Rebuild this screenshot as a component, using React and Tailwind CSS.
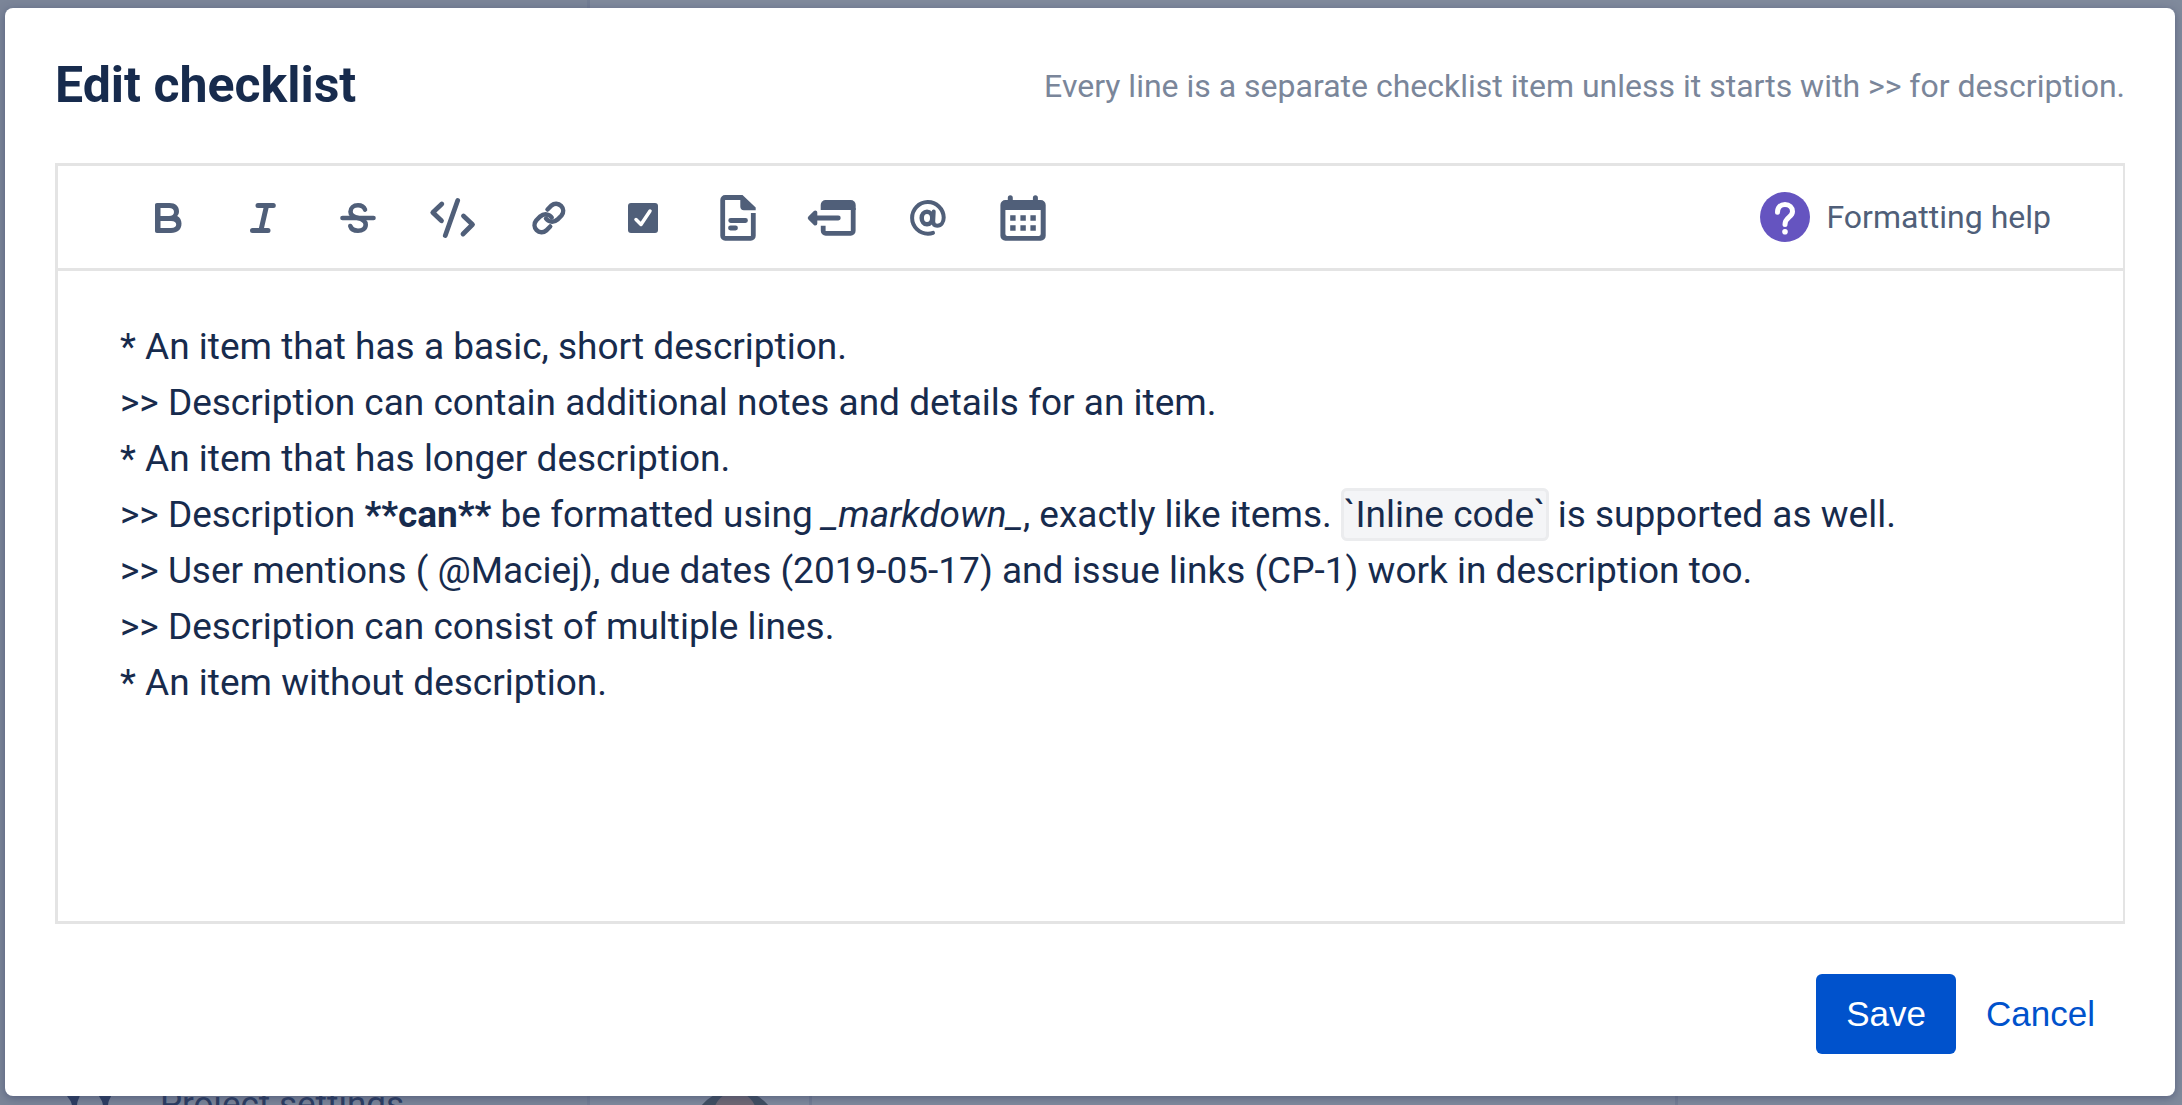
import React, { useState } from 'react';

const IconBold = () => (
  <path fillRule="evenodd" d="M17 17c0-1.300.700-2 2-2h12.500c6 0 9.500 3.200 9.500 8.200 0 2-.6 3.600-1.800 4.800 2.800 1.500 4.300 4.300 4.300 7.500 0 6-4 9.500-10.500 9.500H19c-1.300 0-2-.7-2-2zm5.500 3v8H31c3.200 0 5-1.200 5-4s-1.800-4-5-4zm0 13v7H33c3.500 0 5.200-1.200 5.200-3.500S36.500 33 33 33z" fill="currentColor" />
);

const IconItalic = () => (
  <path d="M25 17.500h15.300M19.500 42.500h15.500M33.500 18l-5.500 24" stroke="currentColor" strokeWidth="5" strokeLinecap="round" fill="none" />
);

const IconStrike = () => (
  <g stroke="currentColor" strokeWidth="4.600" strokeLinecap="round" fill="none">
    <path d="M14.500 30h31" />
    <path d="M37 21.500c-1.200-3-4-4.200-7-4.200-4.500 0-7.500 2.700-7.500 6.500 0 3.700 3 5 7.500 6.200 5 1.300 7.700 3 7.700 6.700 0 3.700-3.200 6-7.700 6-3.800 0-6.800-1.700-7.700-4.700" />
  </g>
);

const IconCode = () => (
  <path d="M18.800 16L9.800 24.500l8.700 8.300M34.700 12.500L22.300 47.500M40.500 28l9 8.500-9.500 9.500" stroke="currentColor" strokeWidth="4.800" strokeLinecap="round" strokeLinejoin="round" fill="none" />
);

const IconLink = () => (
  <g stroke="currentColor" strokeWidth="4.500" strokeLinecap="round" fill="none">
    <path d="M29.500 21.500l4-4a7.100 7.100 0 0 1 10 10l-4 4c-4 3.500-9 2.500-11.500-1" />
    <path d="M32.200 38.500l-4 4a7.100 7.100 0 0 1-10-10l4-4c4-3.500 9-2.500 11.500 1" />
  </g>
);

const IconTask = () => (
  <>
    <rect x="15" y="15" width="30" height="30" rx="3" fill="currentColor" />
    <path d="M23 31.500l5 5L37 23" stroke="white" strokeWidth="3.500" strokeLinecap="round" strokeLinejoin="round" fill="none" />
  </>
);

const IconPage = () => (
  <>
    <path d="M45.300 25v22.800a2.500 2.500 0 0 1-2.500 2.500H17.200a2.500 2.500 0 0 1-2.500-2.500V12a2.500 2.500 0 0 1 2.500-2.500H34" stroke="currentColor" strokeWidth="4.800" fill="none" />
    <path d="M32.300 7.100h2.200L47.700 19.500v2.800H36a3.700 3.700 0 0 1-3.700-3.700z" fill="currentColor" />
    <path d="M22.700 32.500h14.800M22.500 40h5" stroke="currentColor" strokeWidth="4.800" strokeLinecap="round" />
  </>
);

const IconPanel = () => (
  <>
    <path d="M17.700 22v-5a5 5 0 0 1 5-5h25a5 5 0 0 1 5 5v5z" fill="currentColor" />
    <path d="M50.200 20v22.800a2.500 2.500 0 0 1-2.500 2.500h-25a2.500 2.500 0 0 1-2.500-2.500v-5" stroke="currentColor" strokeWidth="4.800" fill="none" />
    <path d="M11 30h24.300" stroke="currentColor" strokeWidth="4.800" strokeLinecap="round" />
    <path d="M12.300 24.500v11L6.800 30z" stroke="currentColor" strokeWidth="4" strokeLinejoin="round" fill="currentColor" />
  </>
);

const IconMention = () => (
  <g stroke="currentColor" strokeWidth="4" strokeLinecap="round" fill="none">
    <ellipse cx="29" cy="30" rx="5.300" ry="6.300" strokeWidth="4.500" />
    <path d="M35.700 23.500l-.5 10c0 2.800 1.500 4.200 4 4.200 4 0 6.500-3.800 6.500-8.200A15.800 15.800 0 1 0 30 45.700c1.700 0 3.400-.2 5-.8" />
  </g>
);

const IconCalendar = () => (
  <>
    <path fillRule="evenodd" d="M12.400 12h2.400V9.800a2.500 2.500 0 0 1 5 0V12h20.100V9.800a2.500 2.500 0 0 1 5 0V12h2.800a5 5 0 0 1 5 5v30.700a5 5 0 0 1-5 5H12.400a5 5 0 0 1-5-5V17a5 5 0 0 1 5-5zm0 10v24a2 2 0 0 0 2 2h31.300a2 2 0 0 0 2-2V22z" fill="currentColor" />
    <path d="M17.200 27.300h5.400v5.400h-5.400zM27.400 27.300h5.400v5.400h-5.400zM37.400 27.300h5.400v5.400h-5.400zM17.200 37.300h5.400v5.400h-5.400zM27.400 37.300h5.400v5.400h-5.400zM37.400 37.300h5.400v5.400h-5.400z" fill="currentColor" />
  </>
);

const tools = [
  { name: 'Bold', icon: IconBold },
  { name: 'Italic', icon: IconItalic },
  { name: 'Strikethrough', icon: IconStrike },
  { name: 'Code', icon: IconCode },
  { name: 'Link', icon: IconLink },
  { name: 'Checkbox', icon: IconTask },
  { name: 'Page', icon: IconPage },
  { name: 'Panel', icon: IconPanel },
  { name: 'Mention', icon: IconMention },
  { name: 'Date', icon: IconCalendar },
];

// The page that stays dimmed behind the dialog
const Backdrop = () => (
  <div className="absolute inset-0 flex overflow-hidden bg-[#808a9c]">
    <div className="flex w-[590px] shrink-0 items-end border-r-3 border-[#747e94] bg-[#7b8598]">
      <div className="-mb-5 flex h-10 items-center gap-10 pl-16 text-[#2b3c60]">
        <svg width="56" height="40" viewBox="0 0 56 40" fill="currentColor">
          <path d="M2 8h14c0 6-3 6-3 14v18H8V22c0-8-5-8-6-14zM34 8h14c-1 6-4 6-4 14v18h-5V22c0-8-4-8-5-14z" />
        </svg>
        <span className="text-[35px] leading-10">Project settings</span>
      </div>
    </div>
    <div className="mt-20 flex w-[222px] shrink-0 items-end justify-center border-r-3 border-[#747e94] pl-[70px]">
      <svg width="88" height="15" viewBox="0 0 88 15">
        <circle cx="44" cy="44" r="44" fill="#404e60" />
        <ellipse cx="44" cy="26" rx="22" ry="24" fill="#6f6873" />
      </svg>
    </div>
    <div className="mt-20 w-[866px] shrink-0 border-r-3 border-[#747e94]" />
  </div>
);

const App = () => {
  const [open, setOpen] = useState(true);

  return (
    <div className="relative min-h-screen overflow-hidden pt-2 pr-[7px] pb-[9px] pl-[5px] font-['Roboto',sans-serif]">
      <Backdrop />

      {open && (
        <div role="dialog" aria-labelledby="title" className="relative flex min-h-[calc(100vh-17px)] flex-col rounded-lg bg-white px-[50px] text-[#172b4d] shadow-[0_2px_8px_rgba(50,60,100,0.5)]">
          <div className="flex h-[155px] items-center justify-between">
            <h1 id="title" className="text-[50px] font-bold">Edit checklist</h1>
            <p className="text-[32px] text-[#7a869a]">Every line is a separate checklist item unless it starts with &gt;&gt; for description.</p>
          </div>

          <div className="flex flex-1 flex-col border-3 border-r-2 border-[#e4e4e4]">
            <div className="flex h-[105px] items-center justify-between border-b-3 border-[#e4e4e4] pr-[72px] pl-20">
              <div className="flex gap-[35px] text-[#505f79]">
                {tools.map(({ name, icon: Icon }) => (
                  <button key={name} type="button" aria-label={name}>
                    <svg width="60" height="60" viewBox="0 -1 60 60"><Icon /></svg>
                  </button>
                ))}
              </div>
              <a href="#help" className="flex items-center gap-4 text-[32px] text-[#505f79]">
                <svg width="50" height="50" viewBox="0 0 50 50">
                  <circle cx="25" cy="25" r="25" fill="#6554c0" />
                  <path d="M17.500 20.300c0-5 3-7.800 7.500-7.800s7.500 3 7.500 7c0 6-7.500 5.500-7.500 13" stroke="white" strokeWidth="5" strokeLinecap="round" fill="none" />
                  <circle cx="25" cy="39.800" r="2.800" fill="white" />
                </svg>
                Formatting help
              </a>
            </div>

            <div role="textbox" aria-label="Checklist" aria-multiline="true" contentEditable suppressContentEditableWarning className="flex-1 px-[62px] pt-12 text-[37px] leading-14 outline-none">
              <p>* An item that has a basic, short description.</p>
              <p>&gt;&gt; Description can contain additional notes and details for an item.</p>
              <p>* An item that has longer description.</p>
              <p>
                &gt;&gt; Description <strong>**can**</strong> be formatted using <em>_markdown_</em>, exactly like items.{' '}
                <code className="rounded-md border-3 border-[#ebecee] bg-[#f4f5f7] py-0.5 font-['Roboto',sans-serif]">`Inline code`</code> is supported as well.
              </p>
              <p>&gt;&gt; User mentions ( @Maciej), due dates (2019-05-17) and issue links (CP-1) work in description too.</p>
              <p>&gt;&gt; Description can consist of multiple lines.</p>
              <p>* An item without description.</p>
            </div>
          </div>

          <div className="flex h-[172px] items-center justify-end gap-[30px] pt-2 pr-[30px] font-['Liberation_Sans',sans-serif] text-[35px]">
            <button type="button" className="h-20 rounded-md bg-[#0052cc] px-[30px] text-white" onClick={() => setOpen(false)}>Save</button>
            <button type="button" className="text-[#0052cc]" onClick={() => setOpen(false)}>Cancel</button>
          </div>
        </div>
      )}
    </div>
  );
};

export default App;
